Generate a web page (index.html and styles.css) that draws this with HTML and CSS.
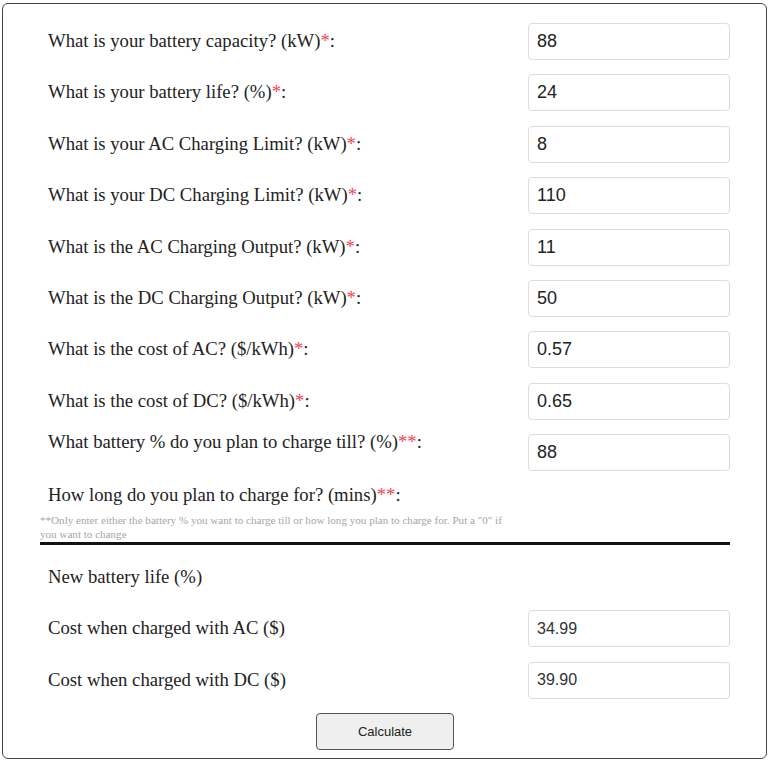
FILE: index.html
```html
<!DOCTYPE html>
<html lang="en">
<head>
  <meta charset="UTF-8">
  <meta name="viewport" content="width=device-width, initial-scale=1.0">
  <title>EV Charging Calculator</title>
  <link rel="stylesheet" href="styles.css">
</head>
<body>
  <form class="card" onsubmit="return false;">
    <div class="row">
      <label>What is your battery capacity? (kW)<span class="req">*</span>:</label>
      <input type="text" value="88">
    </div>
    <div class="row">
      <label>What is your battery life? (%)<span class="req">*</span>:</label>
      <input type="text" value="24">
    </div>
    <div class="row">
      <label>What is your AC Charging Limit? (kW)<span class="req">*</span>:</label>
      <input type="text" value="8">
    </div>
    <div class="row">
      <label>What is your DC Charging Limit? (kW)<span class="req">*</span>:</label>
      <input type="text" value="110">
    </div>
    <div class="row">
      <label>What is the AC Charging Output? (kW)<span class="req">*</span>:</label>
      <input type="text" value="11">
    </div>
    <div class="row">
      <label>What is the DC Charging Output? (kW)<span class="req">*</span>:</label>
      <input type="text" value="50">
    </div>
    <div class="row">
      <label>What is the cost of AC? ($/kWh)<span class="req">*</span>:</label>
      <input type="text" value="0.57">
    </div>
    <div class="row">
      <label>What is the cost of DC? ($/kWh)<span class="req">*</span>:</label>
      <input type="text" value="0.65">
    </div>
    <div class="row top">
      <label>What battery % do you plan to charge till? (%)<span class="req">**</span>:</label>
      <input type="text" value="88">
    </div>
    <div class="row single">
      <label>How long do you plan to charge for? (mins)<span class="req">**</span>:</label>
    </div>
    <p class="note">**Only enter either the battery % you want to charge till or how long you plan to charge for. Put a "0" if you want to change</p>
    <hr class="divider">
    <div class="row result">
      <label>New battery life (%)</label>
    </div>
    <div class="row result">
      <label>Cost when charged with AC ($)</label>
      <input type="text" value="34.99" readonly>
    </div>
    <div class="row result">
      <label>Cost when charged with DC ($)</label>
      <input type="text" value="39.90" readonly>
    </div>
    <div class="actions">
      <button type="button">Calculate</button>
    </div>
  </form>
</body>
</html>
```

FILE: styles.css
```css
* {
  box-sizing: border-box;
}
body {
  margin: 3px 1px 2px 2px;
  background-color: white;
  font-family: "Liberation Serif", "Times New Roman", serif;
  color: #222;
}
.card {
  height: 756px;
  border: 1px solid #444;
  border-radius: 6px;
  padding: 19px 36px 0px 37px;
  display: flex;
  flex-direction: column;
}
.row {
  display: flex;
  justify-content: space-between;
  align-items: center;
  height: 37px;
  margin-bottom: 14.4px;
}
.row > label {
  padding-left: 8px;
  font-size: 18.7px;
  line-height: 22px;
  margin-top: -1px;
}
.req {color: #f43f4f;}
.row > input {
  width: 202px;
  height: 37px;
  border: 1px solid #dcdcdc;
  border-radius: 4px;
  padding: 0px 8px;
  font-family: "Liberation Sans", Arial, sans-serif;
  font-size: 18px;
  color: #222;
  outline: none;
}
.row.top {
  align-items: flex-start;
  height: 37px;
  margin-bottom: 13px;
}
.row.top > label {
  margin-top: -3px;
}
.row.single {
  height: 22px;
  margin-bottom: 7px;
}
.note {
  margin: 0px;
  width: 478px;
  font-size: 11.1px;
  line-height: 14px;
  color: #a6a6a6;
}
.divider {
  margin: 1px 0px 14px 0px;
  height: 3px;
  border: none;
  background-color: #111;
}
.row.result {
  margin-bottom: 14.2px;
}
.row.result > input {
  font-size: 16px;
  color: #333;
}
.actions {
  display: flex;
  justify-content: center;
}
.actions > button {
  width: 138px;
  height: 37px;
  border: 1px solid #555;
  border-radius: 4px;
  background-color: #efefef;
  font-family: "Liberation Sans", Arial, sans-serif;
  font-size: 13px;
  color: #222;
  cursor: pointer;
}
```
